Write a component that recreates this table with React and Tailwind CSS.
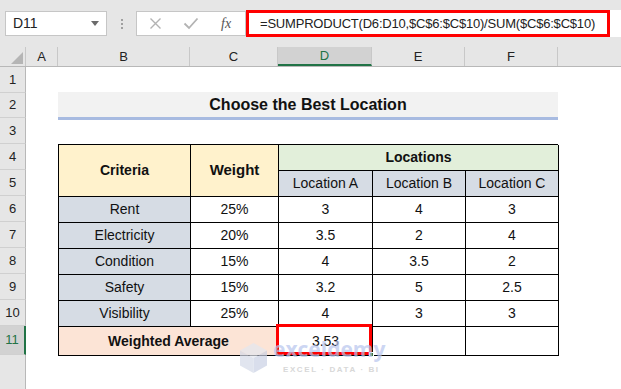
import React from "react";

const cols = [
  { k: "A", w: "w-[32px]" },
  { k: "B", w: "w-[132px]" },
  { k: "C", w: "w-[88px]" },
  { k: "D", w: "w-[94px]" },
  { k: "E", w: "w-[93px]" },
  { k: "F", w: "w-[93px]" },
];

const rowHeights = [
  "h-[26px]", "h-[25px]", "h-[26px]", "h-[26px]", "h-[26px]", "h-[26px]",
  "h-[26px]", "h-[26px]", "h-[26px]", "h-[26px]", "h-[29px]",
];

const data = [
  ["Rent", "25%", "3", "4", "3"],
  ["Electricity", "20%", "3.5", "2", "4"],
  ["Condition", "15%", "4", "3.5", "2"],
  ["Safety", "15%", "3.2", "5", "2.5"],
  ["Visibility", "25%", "4", "3", "3"],
];

function Cell({ className = "", children }) {
  return (
    <div className={"flex items-center justify-center border-r border-b border-black text-[14px] text-[#111] " + className}>
      {children}
    </div>
  );
}

export default function App() {
  return (
    <div className="relative w-[621px] h-[389px] overflow-hidden bg-white" style={{ fontFamily: '"Liberation Sans", Arial, sans-serif' }}>
      {/* Formula toolbar */}
      <div className="h-[47px] bg-[#e6e6e6] flex items-start pt-[11px]">
        <div className="ml-[5px] w-[102px] h-[25px] bg-white border border-[#c6c6c6] flex items-center justify-between pl-[7px] pr-[7px]">
          <span className="text-[14px] text-[#222]">D11</span>
          <span className="w-0 h-0 border-l-[4px] border-r-[4px] border-t-[5px] border-l-transparent border-r-transparent border-t-[#6b6b6b]" />
        </div>
        <div className="ml-[14px] mt-[8px] flex flex-col gap-[2px]">
          <span className="w-[2px] h-[2px] bg-[#a0a0a0]" />
          <span className="w-[2px] h-[2px] bg-[#a0a0a0]" />
          <span className="w-[2px] h-[2px] bg-[#a0a0a0]" />
        </div>
        <div className="ml-[13px] w-[110px] h-[25px] bg-white border border-[#c6c6c6] flex items-center">
          <svg className="ml-[12px]" width="13" height="13" viewBox="0 0 13 13">
            <path d="M1.5 1.5 L11.5 11.5 M11.5 1.5 L1.5 11.5" stroke="#b3b3b3" strokeWidth="1.4" fill="none" />
          </svg>
          <svg className="ml-[21px]" width="16" height="13" viewBox="0 0 16 13">
            <path d="M1.5 6.5 L6 11 L14.5 1.5" stroke="#b3b3b3" strokeWidth="1.8" fill="none" />
          </svg>
          <span className="ml-[22px] text-[14px] italic text-[#555]" style={{ fontFamily: '"Liberation Serif", "Times New Roman", serif' }}>fx</span>
        </div>
        <div className="-mt-px flex-1 h-[27px] bg-white">
          <div className="w-[364px] h-[27px] border-[3px] border-[#ff0000] flex items-center pl-[11px] text-[13px] text-[#222] tracking-[-0.2px] whitespace-nowrap">
            =SUMPRODUCT(D6:D10,$C$6:$C$10)/SUM($C$6:$C$10)
          </div>
        </div>
      </div>

      {/* Column headers */}
      <div className="h-[20px] flex bg-[#e6e6e6] border-b border-[#b8b8b8]">
        <div className="w-[26px] h-full border-r border-[#c8c8c8] relative">
          <svg className="absolute right-[2px] bottom-[2px]" width="12" height="12" viewBox="0 0 12 12">
            <path d="M12 0 L12 12 L0 12 Z" fill="#b5b5b5" />
          </svg>
        </div>
        {cols.map((c) => (
          <div
            key={c.k}
            className={
              c.w +
              " h-full flex items-center justify-center text-[13px] border-r " +
              (c.k === "D"
                ? "bg-[#d2d2d2] text-[#217346] border-[#c8c8c8] border-b-2 border-b-[#217346]"
                : "text-[#222] border-[#c8c8c8]")
            }
          >
            {c.k}
          </div>
        ))}
        <div className="flex-1 h-full" />
      </div>

      {/* Sheet body */}
      <div className="grid grid-cols-[26px_32px_132px_88px_94px_93px_93px_1fr] grid-rows-[26px_25px_26px_26px_26px_26px_26px_26px_26px_26px_29px_1fr] h-[322px]">
        {rowHeights.map((h, i) => (
          <div
            key={i}
            className={
              "col-start-1 flex items-center justify-center text-[13px] border-b border-[#d0d0d0] " +
              (i === 10
                ? "bg-[#d2d2d2] text-[#217346] border-r-2 border-r-[#217346]"
                : "bg-[#e6e6e6] text-[#222] border-r border-r-[#b8b8b8]")
            }
            style={{ gridRowStart: i + 1 }}
          >
            {i + 1}
          </div>
        ))}
        <div className="col-start-1 row-start-12 bg-[#e6e6e6] border-r border-r-[#b8b8b8]" />

        {/* Title */}
        <div className="col-start-3 col-span-5 row-start-2 self-start -mt-px h-[28px] bg-[#f2f2f2] border-b-[3px] border-[#a8bbe1] flex items-center justify-center">
          <span className="text-[16px] font-bold text-[#111]">Choose the Best Location</span>
        </div>

        {/* Table */}
        <div className="col-start-3 col-span-5 row-start-4 row-span-8 self-start border-l border-t border-black grid grid-cols-[132px_88px_94px_93px_93px] grid-rows-[26px_26px_26px_26px_26px_26px_26px_29px]">
          <Cell className="row-span-2 bg-[#fff2cc] font-bold text-[14.5px]">Criteria</Cell>
          <Cell className="row-span-2 bg-[#fff2cc] font-bold text-[15px]">Weight</Cell>
          <Cell className="col-span-3 bg-[#e2efda] font-bold">Locations</Cell>
          <Cell className="bg-[#d6dce4]">Location A</Cell>
          <Cell className="bg-[#d6dce4]">Location B</Cell>
          <Cell className="bg-[#d6dce4]">Location C</Cell>
          {data.map((r) => (
            <React.Fragment key={r[0]}>
              <Cell className="bg-[#d6dce4]">{r[0]}</Cell>
              <Cell>{r[1]}</Cell>
              <Cell>{r[2]}</Cell>
              <Cell>{r[3]}</Cell>
              <Cell>{r[4]}</Cell>
            </React.Fragment>
          ))}
          <Cell className="col-span-2 bg-[#fce4d6] font-bold text-[14.5px]">Weighted Average</Cell>
          <Cell className="relative">
            3.53
            <span className="absolute -left-[3px] -top-[3px] right-0 bottom-0 border-[3px] border-[#ff0000]" />
            <span className="absolute -right-[2px] -bottom-[2px] w-[5px] h-[5px] bg-[#217346] border border-white" />
          </Cell>
          <Cell />
          <Cell />
        </div>
      </div>

      {/* Watermark */}
      <div className="absolute left-[238px] top-[338px] flex items-start pointer-events-none opacity-70">
        <svg width="31" height="32" viewBox="0 0 31 32" className="mt-[4px]">
          <polygon points="15.5,1 29,8.5 15.5,16 2,8.5" fill="#e3e7f1" />
          <polygon points="2,8.5 15.5,16 15.5,31 2,23.5" fill="#d5dbe9" />
          <polygon points="29,8.5 15.5,16 15.5,31 29,23.5" fill="#c9d1e4" />
        </svg>
        <div className="ml-[4px] flex flex-col items-start">
          <span className="text-[21px] font-bold leading-[22px] text-[#b7c5ee]" style={{ fontFamily: '"Open Sans", "Liberation Sans", sans-serif' }}>exceldemy</span>
          <span className="mt-[4px] ml-[10px] text-[8px] font-bold tracking-[1.6px] text-[#c8c8c8] whitespace-nowrap">EXCEL · DATA · BI</span>
        </div>
      </div>
    </div>
  );
}
